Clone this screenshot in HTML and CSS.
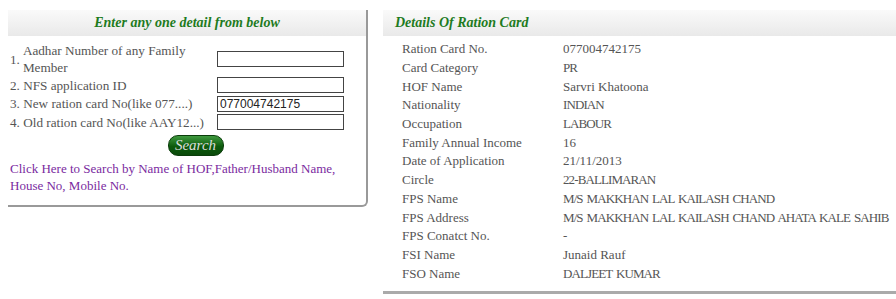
FILE: index.html
```html
<!DOCTYPE html>
<html lang="en">
<head>
    <meta charset="UTF-8">
    <title>Ration Card Details</title>
    <link rel="stylesheet" href="styles.css">
</head>
<body>
    <div class="page">
        <!-- Search Box -->
        <div class="search-box">
            <div class="box-head center">Enter any one detail from below</div>
            <table class="search-table">
                <tr>
                    <td class="lbl"><span class="num">1.</span><span class="wrap">Aadhar Number of any Family Member</span></td>
                    <td><input type="text" class="field"></td>
                </tr>
                <tr>
                    <td class="lbl">2. NFS application ID</td>
                    <td><input type="text" class="field"></td>
                </tr>
                <tr>
                    <td class="lbl">3. New ration card No(like 077....)</td>
                    <td><input type="text" class="field" value="077004742175"></td>
                </tr>
                <tr>
                    <td class="lbl">4. Old ration card No(like AAY12...)</td>
                    <td><input type="text" class="field"></td>
                </tr>
            </table>
            <div class="btn-row"><button class="search-btn">Search</button></div>
            <a href="#" class="name-link">Click Here to Search by Name of HOF,Father/Husband Name, House No, Mobile No.</a>
        </div>

        <!-- Details -->
        <div class="details-box">
            <div class="box-head">Details Of Ration Card</div>
            <table class="details-table">
                <tr><td>Ration Card No.</td><td>077004742175</td></tr>
                <tr><td>Card Category</td><td class="caps">PR</td></tr>
                <tr><td>HOF Name</td><td>Sarvri Khatoona</td></tr>
                <tr><td>Nationality</td><td class="caps">INDIAN</td></tr>
                <tr><td>Occupation</td><td class="caps">LABOUR</td></tr>
                <tr><td>Family Annual Income</td><td>16</td></tr>
                <tr><td>Date of Application</td><td>21/11/2013</td></tr>
                <tr><td>Circle</td><td class="caps">22-BALLIMARAN</td></tr>
                <tr><td>FPS Name</td><td class="caps">M/S MAKKHAN LAL KAILASH CHAND</td></tr>
                <tr><td>FPS Address</td><td class="caps">M/S MAKKHAN LAL KAILASH CHAND AHATA KALE SAHIB</td></tr>
                <tr><td>FPS Conatct No.</td><td>-</td></tr>
                <tr><td>FSI Name</td><td>Junaid Rauf</td></tr>
                <tr><td>FSO Name</td><td class="caps">DALJEET KUMAR</td></tr>
            </table>
        </div>
    </div>
</body>
</html>
```

FILE: styles.css
```css
/* General */
body {
    margin: 8px 0 8px 8px;
    font-family: "Liberation Serif", "Times New Roman", serif;
    font-size: 13px;
    color: #555;
    background: #fff;
    overflow: hidden;
}

.page {
    display: flex;
    align-items: flex-start;
    gap: 15px;
    padding-top: 2px;
}

/* Box headers */
.box-head {
    height: 26px;
    line-height: 26px;
    font-weight: bold;
    font-style: italic;
    color: #1e7b1e;
    font-size: 14px;
    background: linear-gradient(to bottom, #fafafa, #e9e9e9);
}

.box-head.center {
    text-align: center;
}

/* Search box */
.search-box {
    flex: none;
    width: 358px;
    padding-bottom: 11px;
    border-right: 2px solid #999;
    border-bottom: 2px solid #999;
    border-bottom-right-radius: 6px;
}

.search-table {
    border-collapse: collapse;
    margin: 6px 0 0 2px;
}

.search-table td {
    padding: 0;
    height: 18.5px;
    vertical-align: middle;
}

.search-table .lbl {
    width: 207px;
    line-height: 17px;
    font-size: 13.2px;
}

.num {
    display: inline-block;
    vertical-align: middle;
    margin-right: 3px;
}

.wrap {
    display: inline-block;
    vertical-align: middle;
    width: 170px;
}

.field {
    width: 127px;
    height: 16px;
    box-sizing: border-box;
    border: 1px solid #444;
    padding: 0 2px;
    margin: 1px 0;
    font-family: "Liberation Sans", Arial, sans-serif;
    font-size: 12px;
    color: #222;
    display: block;
}

.btn-row {
    text-align: center;
    margin-top: 3px;
    padding-left: 17px;
}

.search-btn {
    width: 56px;
    height: 21px;
    border: 1px solid #0b3d0b;
    border-radius: 10px;
    background: linear-gradient(to bottom, #3f9a3f, #0d5a0d 55%, #0a4a0a);
    color: #ddd;
    font-family: "Liberation Serif", serif;
    font-style: italic;
    font-size: 15px;
    padding: 0;
    cursor: pointer;
}

.name-link {
    display: block;
    margin: 4px 0 0 2px;
    color: #7a2aa0;
    text-decoration: none;
    line-height: 17px;
    font-size: 13px;
}

/* Details box */
.details-box {
    flex: 1;
    min-width: 0;
    padding-bottom: 8px;
    border-bottom: 3px solid #aaa;
}

.details-box .box-head {
    padding-left: 12px;
}

.details-table {
    border-collapse: collapse;
    margin: 4px 0 0 19px;
}

.details-table td {
    padding: 0;
    height: 18.7px;
    white-space: nowrap;
}

.details-table td:first-child {
    min-width: 161px;
    width: 161px;
}

.details-table .caps {
    letter-spacing: -0.9px;
    word-spacing: 1.5px;
}
```
